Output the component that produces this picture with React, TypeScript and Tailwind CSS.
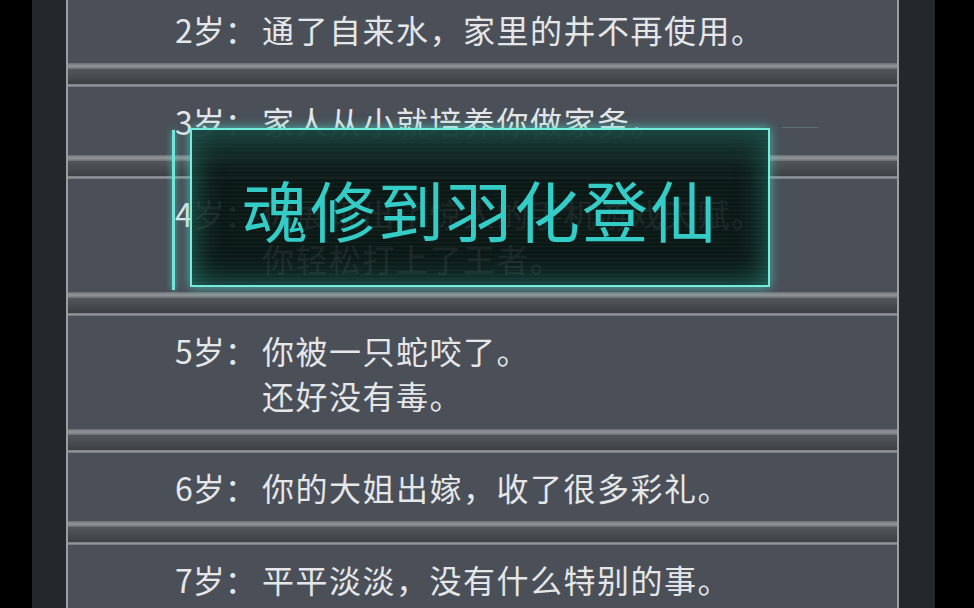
const FONT = "font-['Noto_Sans_CJK_SC','Noto_Sans',sans-serif]";

type Entry = { age: string; lines: string[] };

const ENTRIES: Entry[] = [
  { age: '2岁：', lines: ['通了自来水，家里的井不再使用。'] },
  { age: '3岁：', lines: ['家人从小就培养你做家务。'] },
  { age: '4岁：', lines: ['你展现出了惊人的手机游戏天赋。', '你轻松打上了王者。'] },
  { age: '5岁：', lines: ['你被一只蛇咬了。', '还好没有毒。'] },
  { age: '6岁：', lines: ['你的大姐出嫁，收了很多彩礼。'] },
  { age: '7岁：', lines: ['平平淡淡，没有什么特别的事。'] },
];

function Divider() {
  return (
    <div className="flex h-[24px] flex-col">
      <div className="h-[6px] bg-gradient-to-b from-[#6c7075] via-[#93979b] to-[#6a6e72]" />
      <div className="flex-1 bg-gradient-to-b from-[#53575c] to-[#3c4044]" />
      <div className="h-[3px] bg-gradient-to-b from-[#7a7e83] via-[#909499] to-[#6e737a]" />
    </div>
  );
}

function Row({ entry }: { entry: Entry }) {
  return (
    <div className="flex pt-[12px] pb-[11px] pl-[107px] text-[32px] leading-[45px] tracking-[1.5px] text-[#e4e6e8]">
      <div className="w-[87px] shrink-0 tracking-[0px]">{entry.age}</div>
      <div className="flex flex-col">
        {entry.lines.map((l) => (
          <div key={l} className="whitespace-nowrap">{l}</div>
        ))}
      </div>
    </div>
  );
}

function Banner() {
  return (
    <>
      {/* side accent line */}
      <div className="absolute left-[104px] top-[130px] h-[160px] w-[3px] bg-[#6fe6d6] shadow-[0_0_6px_rgba(80,230,210,0.8)]" />
      {/* faint trailing line */}
      <div className="absolute left-[714px] top-[127px] h-[1px] w-[36px] bg-[#7fb7b0] opacity-30" />
      <div className="absolute left-[122px] top-[128px] flex h-[159px] w-[580px] items-center justify-center border-2 border-[#76ecdc] bg-[#051210]/90 shadow-[0_0_10px_rgba(70,220,200,0.75),inset_0_0_30px_rgba(60,200,180,0.5)]">
        <div className="absolute inset-0 bg-[repeating-linear-gradient(to_bottom,rgba(120,220,200,0.05)_0px,rgba(120,220,200,0.05)_1px,transparent_1px,transparent_4px)]" />
        <div className="absolute inset-x-0 top-0 h-[50px] bg-gradient-to-b from-[#1d4440]/60 to-transparent" />
        <span className="relative text-[66px] font-normal leading-none tracking-[2px] text-[#33ccc7]">
          魂修到羽化登仙
        </span>
      </div>
    </>
  );
}

export default function App() {
  return (
    <div className={`flex h-[608px] w-[974px] overflow-hidden bg-black ${FONT}`}>
      <div className="w-[32px] shrink-0 bg-black" />
      <div className="w-[34px] shrink-0 bg-[#24272b]" />
      <div className="w-[2px] shrink-0 bg-[#9a9ea3]" />

      <main className="relative flex-1 bg-[#4a4f58]">
        <div className="-mt-[5px] flex flex-col">
          {ENTRIES.map((e, i) => (
            <div key={e.age}>
              {i > 0 && <Divider />}
              <Row entry={e} />
            </div>
          ))}
        </div>
        <Banner />
      </main>

      <div className="w-[2px] shrink-0 bg-[#9a9ea3]" />
      <div className="w-[36px] shrink-0 bg-[#24272b]" />
      <div className="w-[39px] shrink-0 bg-black" />
    </div>
  );
}
